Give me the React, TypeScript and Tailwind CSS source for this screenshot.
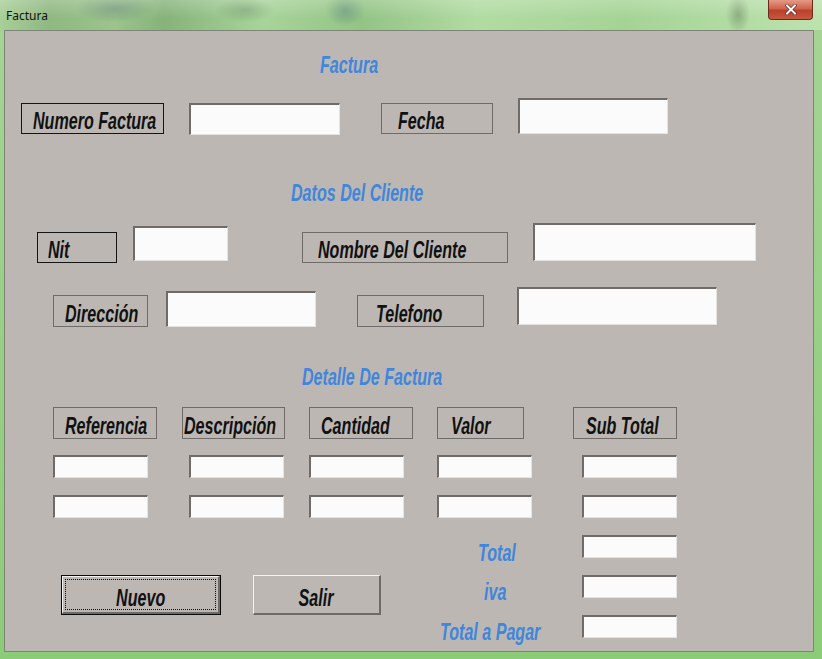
import React from 'react';

const LABEL_FONT = "font-['Liberation_Sans','Arial',sans-serif]";

// Texto condensado (imita Agency FB negrita cursiva)
function Narrow({ text, center = false }: { text: string; center?: boolean }) {
  return (
    <span
      className={`inline-block ${LABEL_FONT} font-bold italic text-[24px] leading-[24px] whitespace-nowrap scale-x-[0.67] ${center ? 'origin-center' : 'origin-left'}`}
    >
      {text}
    </span>
  );
}

// Etiqueta con borde (control Label de VB)
function Caption({
  text,
  w,
  h = 31,
  pl,
  dark = false,
  className = '',
}: {
  text: string;
  w: number;
  h?: number;
  pl: number;
  dark?: boolean;
  className?: string;
}) {
  return (
    <div
      className={`flex items-center shrink-0 overflow-hidden border text-[#111] ${dark ? 'border-[#141414]' : 'border-[#6f6b68]'} ${className}`}
      style={{ width: w, height: h, paddingLeft: pl }}
    >
      <div className="pt-[7px]">
        <Narrow text={text} />
      </div>
    </div>
  );
}

// Caja de texto hundida
function Field({ w, h = 23, className = '' }: { w: number; h?: number; className?: string }) {
  return (
    <div
      className={`shrink-0 bg-[#fcfbfb] border-t-2 border-l-2 border-b border-r border-t-[#6e6b68] border-l-[#6e6b68] border-b-[#e6e3e0] border-r-[#e6e3e0] ${className}`}
      style={{ width: w, height: h }}
    />
  );
}

function Heading({ text, className = '' }: { text: string; className?: string }) {
  return (
    <div className={`text-[#3f86dc] shrink-0 ${className}`}>
      <Narrow text={text} />
    </div>
  );
}

function TitleBar() {
  return (
    <div className="relative h-[30px] flex items-start">
      <div className="absolute inset-0 bg-[linear-gradient(90deg,#a9cf98_0%,#8fb882_6%,#9cc48c_14%,#86b37a_20%,#a8d49a_32%,#93c485_44%,#b2dba2_58%,#a4d495_76%,#bde2ae_100%)]" />
      <div className="absolute inset-0 bg-[radial-gradient(ellipse_40px_14px_at_115px_8px,rgba(60,90,100,0.35),transparent),radial-gradient(ellipse_30px_12px_at_245px_10px,rgba(70,100,70,0.3),transparent),radial-gradient(ellipse_20px_16px_at_345px_10px,rgba(50,90,110,0.35),transparent),radial-gradient(ellipse_12px_20px_at_738px_14px,rgba(60,80,50,0.35),transparent)]" />
      <div className="absolute inset-0 bg-[linear-gradient(180deg,rgba(255,255,255,0.2)_0%,rgba(255,255,255,0)_60%)]" />
      <span className="relative ml-[6px] mt-[9px] font-['Noto_Sans','Liberation_Sans',sans-serif] text-[12px] leading-[14px] text-[#111]">
        Factura
      </span>
      <div className="ml-auto mr-[9px] relative w-[45px] h-[20px] rounded-b-[4px] border border-t-0 border-[#6b2a1f] bg-[linear-gradient(180deg,#e49a86_0%,#d0634b_45%,#b8412b_55%,#c9583f_100%)] flex items-center justify-center">
        <svg width="12" height="11" viewBox="0 0 12 11">
          <path d="M2 1.5 L10 9.5 M10 1.5 L2 9.5" stroke="#5a1d12" strokeWidth="3.2" strokeLinecap="square" />
          <path d="M2 1.5 L10 9.5 M10 1.5 L2 9.5" stroke="#ffffff" strokeWidth="2" strokeLinecap="square" />
        </svg>
      </div>
    </div>
  );
}

function Button({ text, w, focused = false, className = '' }: { text: string; w: number; focused?: boolean; className?: string }) {
  return (
    <div
      className={`shrink-0 h-[40px] ${focused ? 'border border-[#0a0a0a]' : ''} ${className}`}
      style={{ width: w }}
    >
      <div className="h-full w-full border-t border-l border-t-[#f4f2f0] border-l-[#f4f2f0] border-b-2 border-r-2 border-b-[#6d6a67] border-r-[#6d6a67] bg-[#bcb7b3] flex items-center justify-center relative text-[#111]">
        {focused && <div className="absolute inset-[2px] border border-dotted border-[#111]" />}
        <div className="pt-[8px]">
          <Narrow text={text} center />
        </div>
      </div>
    </div>
  );
}

export default function App() {
  return (
    <div className="w-[822px] h-[659px] overflow-hidden bg-[linear-gradient(180deg,#a6d496_0%,#8ccb78_100%)] flex flex-col">
      <TitleBar />
      <div className="ml-[4px] w-[810px] h-[622px] bg-[#bcb7b3] border border-[#7c8577] flex flex-col">
        <Heading text="Factura" className="h-[24px] ml-[315px] mt-[22px]" />

        {/* Numero factura / fecha */}
        <div className="flex items-start mt-[21px]">
          <Caption text="Numero Factura" w={143} pl={11} dark className="ml-[16px] mt-[5px]" />
          <Field w={151} h={32} className="ml-[25px] mt-[5px]" />
          <Caption text="Fecha" w={112} pl={16} className="ml-[41px] mt-[5px]" />
          <Field w={150} h={36} className="ml-[25px]" />
        </div>

        <Heading text="Datos Del Cliente" className="h-[24px] ml-[286px] mt-[46px]" />

        {/* Nit / nombre */}
        <div className="flex items-start mt-[18px]">
          <Caption text="Nit" w={80} pl={10} dark className="ml-[32px] mt-[9px]" />
          <Field w={95} h={35} className="ml-[16px] mt-[3px]" />
          <Caption text="Nombre Del Cliente" w={206} pl={15} className="ml-[74px] mt-[9px]" />
          <Field w={223} h={38} className="ml-[25px]" />
        </div>

        {/* Direccion / telefono */}
        <div className="flex items-start mt-[24px]">
          <Caption text="Dirección" w={95} h={32} pl={11} className="ml-[48px] mt-[8px]" />
          <Field w={150} h={36} className="ml-[18px] mt-[4px]" />
          <Caption text="Telefono" w={127} h={32} pl={18} className="ml-[41px] mt-[8px]" />
          <Field w={200} h={38} className="ml-[33px]" />
        </div>

        <Heading text="Detalle De Factura" className="h-[24px] ml-[297px] mt-[38px]" />

        {/* Encabezados de detalle */}
        <div className="flex items-start mt-[18px]">
          <Caption text="Referencia" w={104} h={32} pl={11} className="ml-[48px]" />
          <Caption text="Descripción" w={103} h={32} pl={1} className="ml-[25px]" />
          <Caption text="Cantidad" w={104} h={32} pl={11} className="ml-[24px]" />
          <Caption text="Valor" w={87} h={32} pl={13} className="ml-[24px]" />
          <Caption text="Sub Total" w={104} h={32} pl={12} className="ml-[49px]" />
        </div>

        {[0, 1].map((i) => (
          <div key={i} className={`flex items-start ${i === 0 ? 'mt-[16px]' : 'mt-[17px]'}`}>
            <Field w={95} className="ml-[48px]" />
            <Field w={95} className="ml-[41px]" />
            <Field w={95} className="ml-[25px]" />
            <Field w={95} className="ml-[33px]" />
            <Field w={95} className="ml-[50px]" />
          </div>
        ))}

        {/* Totales */}
        <div className="flex items-start h-[23px] mt-[17px]">
          <Heading text="Total" className="w-[104px] h-[20px] ml-[473px] mt-[6px]" />
          <Field w={95} />
        </div>

        <div className="flex items-start mt-[17px]">
          <Button text="Nuevo" w={160} focused className="ml-[56px]" />
          <Button text="Salir" w={128} className="ml-[32px]" />
          <Heading text="iva" className="w-[98px] h-[20px] ml-[103px] mt-[5px]" />
          <Field w={95} />
        </div>

        <div className="flex items-start h-[23px]">
          <Heading text="Total a Pagar" className="w-[142px] h-[20px] ml-[435px] mt-[5px]" />
          <Field w={95} />
        </div>
      </div>
    </div>
  );
}
